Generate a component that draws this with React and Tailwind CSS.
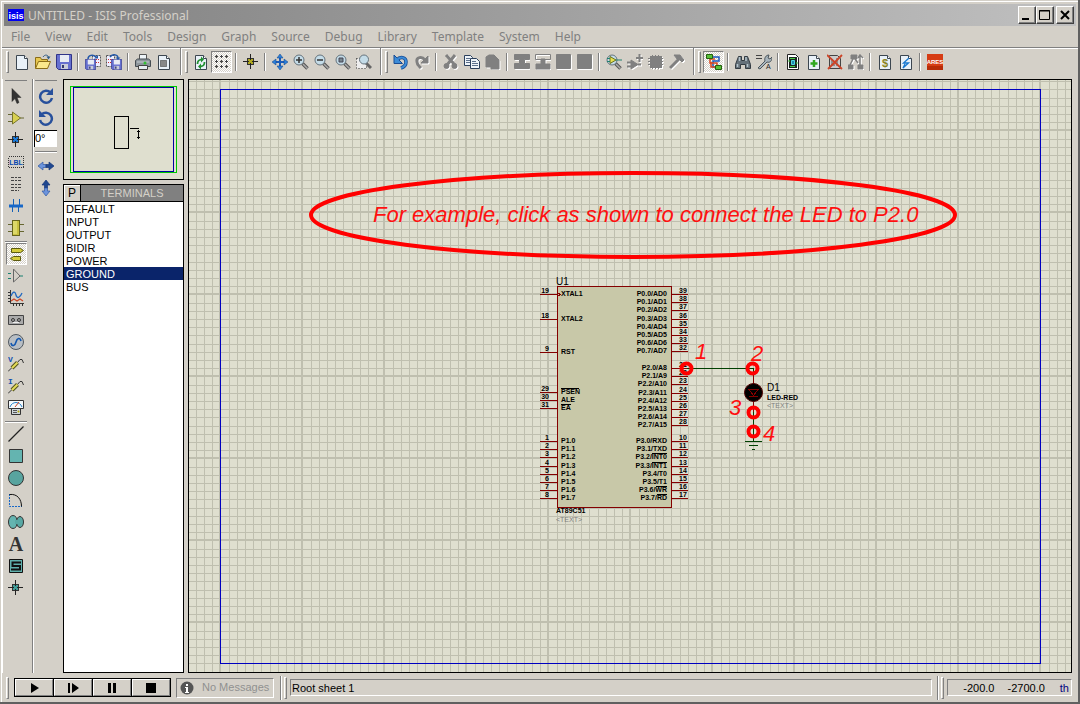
import { useState } from "react";

const Glyph = ({ children, crisp = false }) => (
  <svg
    width="16"
    height="16"
    viewBox="0 0 16 16"
    fill="none"
    shapeRendering={crisp ? "crispEdges" : "auto"}
    aria-hidden="true"
  >
    {children}
  </svg>
);

const Page = ({ children }) => (
  <Glyph>
    <path d="M2.500 1.500h8l3 3v11h-11z" fill="#e9f1f8" stroke="#3c4650" />
    <path d="M10.500 1.500v3h3" fill="#fff" stroke="#3c4650" />
    {children}
  </Glyph>
);

const Lens = ({ children }) => (
  <Glyph>
    <path d="M9.500 9.500l5 5" stroke="#555" strokeWidth="3.500" />
    <path d="M10 10l4.500 4.500" stroke="#aaa" strokeWidth="1.500" />
    <circle cx="6" cy="6" r="5" fill="#c4dce8" stroke="#66737c" />
    {children}
  </Glyph>
);

const Floppy = ({ x = 0, y = 0, s = 16 }) => (
  <svg x={x} y={y} width={s} height={s} viewBox="0 0 16 16">
    <path d="M.5.5h15v15h-13l-2-2z" fill="#6670d0" stroke="#303488" />
    <path d="M4 1h9v7H4z" fill="#e8ecf4" />
    <path d="M5 10h7v5H5z" fill="#c8ccd8" />
    <path d="M6 11h2v3H6z" fill="#333a70" />
  </svg>
);

const Sheet = ({ x }) => (
  <>
    <path d={`M${x}.5 1.500h8v11h-8z`} fill="#eef" stroke="#555" strokeDasharray="2 1" />
    <path d={`M${x + 2} 5.500h5M${x + 2} 8.500h5`} stroke="#d03030" strokeDasharray="1 1" />
  </>
);

const Probe = ({ letter }) => (
  <Glyph>
    <path d="M0 15.500l4-4M9 7l3-3.500h2l1.500 3.500" stroke="#333" />
    <path d="M4 12l5.500-5.500" stroke="#55551c" strokeWidth="4" />
    <path d="M4 12l5.500-5.500" stroke="#e4dc58" strokeWidth="2" />
    <text x="0" y="6" fontSize="8" fontWeight="bold" fill="#1050b0" fontFamily="Liberation Mono, monospace">
      {letter}
    </text>
  </Glyph>
);

const Marker = ({ color }) => (
  <Glyph crisp>
    <path d="M4.500 4.500h6v6h-6z" fill={color} stroke="#333" />
    <path d="M0 7.500h15M7.500 0v15" stroke="#222" />
    <path d="M6 6h3v3H6z" fill={color} />
  </Glyph>
);

// greyed out icon with the white emboss edge
const Disabled = ({ children }) => (
  <Glyph>
    <g transform="translate(1 1)" fill="#fff" stroke="#fff">{children}</g>
    <g fill="#808080" stroke="#808080">{children}</g>
  </Glyph>
);

const NewIcon = () => <Page />;
const OpenIcon = () => (
  <Glyph>
    <path d="M.5 14V3.500h5l1 2h6V14z" fill="#e8c850" stroke="#8a6c18" />
    <path d="M.500 14.500l3-7h12l-3 7z" fill="#fbe88c" stroke="#8a6c18" />
    <path d="M8 3c2-3 5-2 5.500 0" stroke="#305c88" />
    <path d="M11.500 2.500h4l-2 3z" fill="#305c88" />
  </Glyph>
);
const SaveIcon = () => <Glyph><Floppy /></Glyph>;
const ImportIcon = () => (
  <Glyph>
    <Sheet x={7} />
    <Floppy y={5} s={11} />
    <path d="M3 5c0-4 5-5 8-2" stroke="#2458a8" strokeWidth="1.500" />
    <path d="M9 4.500h4V1z" fill="#2458a8" />
  </Glyph>
);
const ExportIcon = () => (
  <Glyph>
    <Sheet x={0} />
    <Floppy x={5} y={5} s={11} />
    <path d="M4 3c3-4 8-2 8 1" stroke="#2458a8" strokeWidth="1.500" />
    <path d="M9.500 3.500h5L12 6z" fill="#2458a8" />
  </Glyph>
);
const PrintIcon = () => (
  <Glyph>
    <path d="M4.500 6V.5h7V6" fill="#eef4f8" stroke="#555" />
    <path d="M.5 6.500l2-1.500h11l2 1.500v6H.500z" fill="#8e969c" stroke="#444c52" />
    <path d="M3.500 11.500h9v4h-9z" fill="#e8eef2" stroke="#444" />
    <path d="M2 8h12" stroke="#c4ccd0" />
    <circle cx="10" cy="9" r="1.500" fill="#30c030" />
  </Glyph>
);
const PrintAreaIcon = () => (
  <Page><path d="M4.500 6.500h6v6h-6z" fill="#888" stroke="#333" strokeDasharray="1 1" /></Page>
);
const RedrawIcon = () => (
  <Page>
    <path d="M4.500 10c0-4 2-4 4-4.500M11.500 8c0 4-2 4-4 4.500" stroke="#209030" strokeWidth="1.800" />
    <path d="M8 2.500v6l3-3zM8 9.500v6l-3-3z" fill="#209030" />
  </Page>
);
const GridIcon = () => (
  <Glyph crisp>
    {[2, 7, 12].map((y) => (
      <path key={y} d={`M1 ${y}.5h3M6 ${y}.5h3M11 ${y}.5h3M2.500 ${y - 1}v3M7.500 ${y - 1}v3M12.500 ${y - 1}v3`} stroke="#444" />
    ))}
  </Glyph>
);
const OriginIcon = () => <Marker color="#b0a820" />;
const PanIcon = () => (
  <Glyph>
    <path d="M8 3v10M3 8h10" stroke="#1c5cb8" strokeWidth="2" />
    <path d="M8 0l3 4H5zM8 16l3-4H5zM0 8l4-3v6zM16 8l-4-3v6z" fill="#2c80dc" stroke="#104080" strokeWidth=".5" />
  </Glyph>
);
const ZoomInIcon = () => <Lens><path d="M3 6h6M6 3v6" stroke="#333" strokeWidth="1.500" /></Lens>;
const ZoomOutIcon = () => <Lens><path d="M3 6h6" stroke="#333" strokeWidth="1.500" /></Lens>;
const ZoomAllIcon = () => <Lens><path d="M4 4h4v4H4z" fill="#77858d" stroke="#445" /></Lens>;
const ZoomAreaIcon = () => (
  <Glyph>
    <path d="M.5 4.500h10v10H.500z" fill="#eee" stroke="#333" strokeDasharray="1 2" />
    <path d="M10 9l5 5" stroke="#666" strokeWidth="3" />
    <circle cx="8" cy="5.500" r="4.500" fill="#c4dce8" stroke="#66737c" />
  </Glyph>
);
const UndoIcon = () => (
  <Glyph>
    <path d="M4 6c3-4 9-3 9 2 0 3-2 5-5 6" stroke="#184c94" strokeWidth="3.500" />
    <path d="M1 1v8.500h8.500z" fill="#3c8cd8" stroke="#184c94" />
    <path d="M4 6c3-4 9-3 9 2 0 3-2 5-5 6" stroke="#3c8cd8" strokeWidth="2" />
  </Glyph>
);
const RedoIcon = () => (
  <Disabled>
    <path d="M11 6C8 2 2 3 3 8c0 3 2 4 4 6" fill="none" strokeWidth="3" />
    <path d="M14 2v7H7z" />
  </Disabled>
);
const CutIcon = () => (
  <Disabled>
    <path d="M3 1l9 10M12 1L4 11" fill="none" strokeWidth="3" />
    <circle cx="3.500" cy="12" r="2.500" /><circle cx="11.500" cy="12" r="2.500" />
  </Disabled>
);
const CopyIcon = () => (
  <Glyph>
    <path d="M.5 1.500h6l2 2v8h-8z" fill="#eef4fa" stroke="#2c405c" />
    <path d="M2 4.500h4M2 6.500h5M2 8.500h5" stroke="#5c708c" />
    <path d="M6.500 4.500h6l3 3v7h-9z" fill="#eef4fa" stroke="#2c405c" />
    <path d="M8 7.500h4M8 9.500h6M8 11.500h6" stroke="#5c708c" />
  </Glyph>
);
const PasteIcon = () => (
  <Disabled>
    <path d="M1 3l3-2h5l2 2 3 3v9H6v-2H1z" />
  </Disabled>
);
const BlockCopyIcon = () => (
  <Disabled><path d="M.5.500h15v5h-5v4h5v5H.500v-5h5v-4h-5z" /></Disabled>
);
const BlockMoveIcon = () => (
  <Disabled>
    <path d="M.5.500h15v5H.500z" fill="none" />
    <path d="M6 5h4v5h5v5H1v-5h5z" />
  </Disabled>
);
const BlockIcon = () => <Disabled><path d="M.5.500h14v14H.500z" /></Disabled>;
const PickIcon = () => (
  <Lens>
    <path d="M4 2.500v7L10 6z" fill="#e8e050" stroke="#667020" />
    <path d="M1 4.500h3M1 7.500h3M10 6h6" stroke="#208070" />
  </Lens>
);
const MakeDeviceIcon = () => (
  <Disabled>
    <path d="M4 6v9l7-4.500z" />
    <path d="M0 8.500h4M0 12.500h4M11 10.500h3M9 4h7M12.500 0v8" fill="none" strokeWidth="2" />
  </Disabled>
);
const PackageIcon = () => (
  <Disabled>
    <path d="M3 3h10v10H3z" strokeWidth="2" />
    <path d="M0 4.500h15M0 7.500h15M0 10.500h15M4.500 1v14M7.500 1v14M10.500 1v14" />
  </Disabled>
);
const HammerIcon = () => (
  <Disabled>
    <path d="M5 1h6l4 5-2 2-3-3H8z" strokeWidth="1" />
    <path d="M10 5l-9 9" strokeWidth="3" />
  </Disabled>
);
const AutoRouteIcon = () => (
  <Glyph>
    <path d="M7 3h6v4H7v6h3" stroke="#1c58c0" strokeWidth="1.500" />
    <path d="M9 5H4v4h7v4H5V8" stroke="#d84820" strokeWidth="1.500" />
    <path d="M.5.500h6v4h-6zM9.500 11.500h6v4h-6z" fill="#58c038" stroke="#246010" />
  </Glyph>
);
const FindIcon = () => (
  <Glyph>
    <path d="M3.500 2.500h3v4h3v-4h3l3 8v4h-5v-4h-5v4h-5v-4z" fill="#65717a" stroke="#333b42" />
    <path d="M2.500 10v3M12.500 10v3M4.500 3v4M11 3v4" stroke="#b4c4cc" strokeWidth="1.500" />
  </Glyph>
);
const PropertyIcon = () => (
  <Glyph>
    <path d="M0 1.500h6M0 4.500h6" stroke="#444" />
    <path d="M2 14l7-7c-1-3 1-6 4-6l-1 3 2 1 2-2c0 4-2 6-5 5l-7 7z" fill="#a8b4bc" stroke="#4c565c" />
    <text x="10" y="15" fontSize="7" fill="#222" fontFamily="Liberation Sans, sans-serif">A</text>
  </Glyph>
);
const ExplorerIcon = () => (
  <Glyph>
    <path d="M2.500.500h8l3 3v12h-11z" fill="#fff" stroke="#222" />
    <path d="M4 3h8v11H4z" fill="#182820" />
    <path d="M5 4.500h5M5 12.500h5M3 7h2M11 9h2" stroke="#48d048" />
    <path d="M6.500 6.500h3v4h-3z" fill="#208cb0" stroke="#50d8e0" />
  </Glyph>
);
const NewSheetIcon = () => <Page><path d="M8 6v7M4.500 9.500h7" stroke="#30a820" strokeWidth="2.500" /></Page>;
const RemoveSheetIcon = () => (
  <Glyph>
    <path d="M2.500 1.500h8l3 3v10h-11z" fill="#ccc" stroke="#444" />
    <path d="M5 5v6h3M10 4v8" stroke="#555" />
    <path d="M0 1l15 14M15 1L1 15" stroke="#cc4428" strokeWidth="1.800" />
  </Glyph>
);
const ExitSheetIcon = () => (
  <Disabled>
    <path d="M3 1h6v4H3zM0 11h5v4H0zM10 11h5v4h-5z" />
    <path d="M5 5l-3 6M7 5l3 4M12 2v9M10 4l2-3 3 3" fill="none" strokeWidth="1.500" />
  </Disabled>
);
const BomIcon = () => (
  <Page>
    <text x="5" y="13" fontSize="11" fontWeight="bold" fill="#8a8420" fontFamily="Liberation Sans, sans-serif">$</text>
  </Page>
);
const RulesIcon = () => (
  <Page><path d="M11 4L5.500 9h5L5 14l2-4" stroke="#1878d0" strokeWidth="1.300" /></Page>
);
const AresIcon = () => (
  <Glyph>
    <path d="M0 0h16v16H0z" fill="#d63c14" />
    <path d="M0 12h16v4H0z" fill="#b82c08" />
    <text x="8" y="10" textAnchor="middle" fontSize="6" fontWeight="bold" fill="#fff" fontFamily="Liberation Sans, sans-serif">ARES</text>
  </Glyph>
);

const SelectIcon = () => (
  <Glyph><path d="M4 .500v13l3-3 2 5 2-1-2-5h4z" fill="#333" stroke="#222" strokeWidth=".5" /></Glyph>
);
const ComponentIcon = () => (
  <Glyph>
    <path d="M0 4.500h5M0 11.500h5M12 8h4" stroke="#666634" />
    <path d="M4.500 2v12L12.500 8z" fill="#d8d050" stroke="#77752c" />
  </Glyph>
);
const JunctionIcon = () => <Marker color="#1878d8" />;
const LabelIcon = () => (
  <Glyph crisp>
    <path d="M.5 2.500h15v11H.500z" stroke="#333" strokeDasharray="1 1" />
    <text x="8" y="11" textAnchor="middle" fontSize="7" fontWeight="bold" fill="#0848b0" fontFamily="Liberation Sans, sans-serif">LBL</text>
  </Glyph>
);
const ScriptIcon = () => (
  <Glyph crisp>
    <path d="M3 1.500h11M3 4.500h11M3 8.500h11M3 11.500h11M3 14.500h8" stroke="#444" strokeDasharray="3 1 2 1" />
  </Glyph>
);
const BusIcon = () => (
  <Glyph>
    <path d="M5.500 1v6M11.500 1v6M4.500 8v6M10.500 8v6" stroke="#1460b8" />
    <path d="M1 8h14" stroke="#1868c8" strokeWidth="3" />
  </Glyph>
);
const SubcircuitIcon = () => (
  <Glyph crisp>
    <path d="M0 4.500h4M0 11.500h4M12 4.500h4M12 11.500h4" stroke="#666630" />
    <path d="M4.500.500h7v15h-7z" fill="#c8c040" stroke="#66641c" />
    <path d="M5 1h4v13H5z" fill="#dcd868" />
  </Glyph>
);
const TerminalIcon = () => (
  <Glyph>
    <path d="M3.500 2.500h9l3 2-3 2h-9zM5.500 10.500h7v4h-7l-3-2z" fill="#d4cc3c" stroke="#5c5a10" />
  </Glyph>
);
const DevicePinIcon = () => (
  <Glyph>
    <path d="M0 5.500h4M0 10.500h4M12 8h4" stroke="#188070" strokeDasharray="3 1" />
    <path d="M5.500 1v13L12 8z" stroke="#666" />
  </Glyph>
);
const GraphIcon = () => (
  <Glyph>
    <path d="M2.500 0v13.500H16M0 2.500h2M0 5.500h2M0 8.500h2M0 11.500h2M5.500 13v3M8.500 13v3M11.500 13v3M14.500 13v3" stroke="#333" />
    <path d="M3 6c2-5 4-5 5-1s4 3 6-2" stroke="#2068c0" strokeWidth="1.300" />
    <path d="M3 11l3-2 3 2 3-2 3 2" stroke="#cc4828" strokeWidth="1.300" />
  </Glyph>
);
const TapeIcon = () => (
  <Glyph>
    <path d="M.5 3.500h15v9H.500z" fill="#aaa" stroke="#444" />
    <circle cx="5" cy="8" r="1.500" stroke="#333" /><circle cx="11" cy="8" r="1.500" stroke="#333" />
    <path d="M5 10.500h6" stroke="#eee" />
  </Glyph>
);
const GeneratorIcon = () => (
  <Glyph>
    <circle cx="8" cy="8" r="7.500" fill="#b8bec4" stroke="#505860" />
    <path d="M3 9c1 4 4 3 5-1s4-5 5-1" stroke="#1458b0" strokeWidth="1.600" />
  </Glyph>
);
const VoltageIcon = () => <Probe letter="V" />;
const CurrentIcon = () => <Probe letter="I" />;
const MeterIcon = () => (
  <Glyph>
    <path d="M.5.500h15v8H.500z" fill="#f4f8fa" stroke="#333" />
    <path d="M2 7c2-6 10-6 12 0" stroke="#2880c8" />
    <path d="M7 7l4-5" stroke="#cc4020" />
    <path d="M3.500 8.500h9v6h-9z" fill="#ccd4d8" stroke="#333" />
    <path d="M5 10.500h4M5 12.500h4" stroke="#555" />
    <circle cx="10.500" cy="11.500" r="1" fill="#b8a800" />
  </Glyph>
);
const LineIcon = () => <Glyph><path d="M.5 15.500l15-15" stroke="#222" strokeWidth="1.300" /></Glyph>;
const BoxIcon = () => (
  <Glyph><path d="M1.500 1.500h13v13h-13z" fill="#64b4b0" stroke="#333" /></Glyph>
);
const CircleIcon = () => (
  <Glyph><circle cx="8" cy="8" r="7.500" fill="#58a49f" stroke="#333" /></Glyph>
);
const ArcIcon = () => (
  <Glyph>
    <path d="M1.500 2v12.500H14" stroke="#1868c8" strokeDasharray="2 1" />
    <path d="M1.500 2.500c8-1 12 5 12 12" stroke="#111" />
  </Glyph>
);
const PathIcon = () => (
  <Glyph>
    <ellipse cx="5" cy="8" rx="4.500" ry="6.500" fill="#64b4b0" stroke="#333" />
    <ellipse cx="12" cy="8" rx="3.500" ry="5.500" fill="#58a8a4" stroke="#333" />
    <path d="M7 6h4v4H7z" fill="#58a8a4" />
  </Glyph>
);
const TextIcon = () => (
  <span className="font-['Liberation_Serif',serif] text-[20px] leading-[22px] font-bold text-[#333]">A</span>
);
const SymbolIcon = () => (
  <Glyph>
    <path d="M1.500 1.500h13v13h-13z" fill="#60b0ac" stroke="#111" />
    <path d="M13 4.500H4.500V8h7.500v3.500H3" stroke="#111" strokeWidth="2" />
  </Glyph>
);
const Marker2DIcon = () => <Marker color="#409c98" />;

const RotateArrow = () => (
  <>
    <path d="M12.500 4.500A6 6 0 1 0 14 10" stroke="#28509c" strokeWidth="2.500" />
    <path d="M15 0v7H8z" fill="#28509c" />
  </>
);
const RotateCwIcon = () => <Glyph><RotateArrow /></Glyph>;
const RotateCcwIcon = () => <Glyph><g transform="translate(16) scale(-1 1)"><RotateArrow /></g></Glyph>;
const FlipHIcon = () => (
  <Glyph>
    <path d="M0 8l5-4v2.500h3v3H5V12z" fill="#6c94dc" stroke="#3058a4" strokeWidth=".7" />
    <path d="M16 8l-5-4v2.500H8v3h3V12z" fill="#204890" stroke="#183878" strokeWidth=".7" />
  </Glyph>
);
const FlipVIcon = () => (
  <Glyph>
    <path d="M8 0l4 5H9.500v3h-3V5H4z" fill="#204890" stroke="#183878" strokeWidth=".7" />
    <path d="M8 16l4-5H9.500V8h-3v3H4z" fill="#6c94dc" stroke="#3058a4" strokeWidth=".7" />
  </Glyph>
);

const menus = ["File", "View", "Edit", "Tools", "Design", "Graph", "Source", "Debug", "Library", "Template", "System", "Help"];

// "|" marks a separator
const toolbars = [
  [
    ["New", NewIcon], ["Open", OpenIcon], ["Save", SaveIcon], "|",
    ["Import section", ImportIcon], ["Export section", ExportIcon], "|",
    ["Print", PrintIcon], ["Print area", PrintAreaIcon],
  ],
  [
    ["Redraw", RedrawIcon], ["Grid", GridIcon, true], "|", ["Origin", OriginIcon], "|",
    ["Pan", PanIcon], ["Zoom in", ZoomInIcon], ["Zoom out", ZoomOutIcon],
    ["Zoom all", ZoomAllIcon], ["Zoom area", ZoomAreaIcon],
  ],
  [
    ["Undo", UndoIcon], ["Redo", RedoIcon], "|",
    ["Cut", CutIcon], ["Copy", CopyIcon], ["Paste", PasteIcon], "|",
    ["Block copy", BlockCopyIcon], ["Block move", BlockMoveIcon],
    ["Block rotate", BlockIcon], ["Block delete", BlockIcon], "|",
    ["Pick device", PickIcon], ["Make device", MakeDeviceIcon],
    ["Packaging tool", PackageIcon], ["Decompose", HammerIcon],
  ],
  [
    ["Wire autorouter", AutoRouteIcon, true], "|",
    ["Search and tag", FindIcon], ["Property assignment", PropertyIcon], "|",
    ["Design explorer", ExplorerIcon], ["New sheet", NewSheetIcon],
    ["Remove sheet", RemoveSheetIcon], ["Exit to parent", ExitSheetIcon], "|",
    ["Bill of materials", BomIcon], ["Electrical rules check", RulesIcon], "|",
    ["Netlist to ARES", AresIcon],
  ],
];

const modes = [
  ["Selection", SelectIcon], ["Component", ComponentIcon], ["Junction dot", JunctionIcon],
  ["Wire label", LabelIcon], ["Text script", ScriptIcon], ["Buses", BusIcon],
  ["Subcircuit", SubcircuitIcon], "|",
  ["Terminals", TerminalIcon], ["Device pins", DevicePinIcon], ["Graph", GraphIcon],
  ["Tape recorder", TapeIcon], ["Generator", GeneratorIcon], ["Voltage probe", VoltageIcon],
  ["Current probe", CurrentIcon], ["Virtual instruments", MeterIcon], "|",
  ["2D line", LineIcon], ["2D box", BoxIcon], ["2D circle", CircleIcon], ["2D arc", ArcIcon],
  ["2D path", PathIcon], ["2D text", TextIcon], ["2D symbol", SymbolIcon], ["2D marker", Marker2DIcon],
];

const terminals = ["DEFAULT", "INPUT", "OUTPUT", "BIDIR", "POWER", "GROUND", "BUS"];

const ToolButton = ({ label, icon: Icon, pressed = false, onClick }) => (
  <button
    type="button"
    aria-label={label}
    aria-pressed={pressed}
    onClick={onClick}
    className={`flex h-[22px] w-[21px] shrink-0 items-center justify-center ${
      pressed
        ? "border border-t-[#808080] border-l-[#808080] border-r-white border-b-white bg-[repeating-conic-gradient(#fff_0_25%,#d4d0c8_0_50%)] bg-[length:2px_2px]"
        : ""
    }`}
  >
    <Icon />
  </button>
);

const Grip = () => (
  <div className="h-[22px] w-[3px] shrink-0 border border-t-white border-l-white border-r-[#808080] border-b-[#808080]" />
);

const Toolbar = ({ items, first }) => (
  <div className={`flex items-center pr-[6px] ${first ? "pl-[4px]" : "border-l border-[#808080] pl-0"}`}>
    {!first && <div className="mr-[3px] h-[26px] w-px bg-white" />}
    <Grip />
    <div className="ml-[2px] flex items-center">
      {items.map((item, i) =>
        item === "|" ? (
          <div key={i} className="mx-[3px] h-[18px] w-[2px] border-l border-r border-l-[#808080] border-r-white" />
        ) : (
          <ToolButton key={i} label={item[0]} icon={item[1]} pressed={item[2]} />
        )
      )}
    </div>
  </div>
);

const TitleBar = () => (
  <header className="flex h-[22px] shrink-0 items-center bg-linear-to-r from-[#808080] to-[#c0c0c0] pr-[2px] pl-[4px]">
    <svg width="16" height="12" aria-hidden="true">
      <rect width="16" height="12" fill="#0000f0" />
      <text x="8" y="10" textAnchor="middle" fontSize="9" fontWeight="bold" fill="#fff" fontFamily="Liberation Sans, sans-serif">isis</text>
    </svg>
    <h1 className="ml-1 flex-1 pt-[2px] text-[12px] leading-[20px] text-[#d4d0c8]">UNTITLED - ISIS Professional</h1>
    {["Minimize", "Maximize", "Close"].map((name) => (
      <button
        key={name}
        type="button"
        aria-label={name}
        className={`h-[18px] w-[18px] border border-t-white border-l-white border-r-[#404040] border-b-[#404040] bg-[#d4d0c8] shadow-[inset_-1px_-1px_#808080] ${
          name === "Close" ? "ml-[2px]" : ""
        }`}
      >
        <Glyph>
          {name === "Minimize" && <path d="M3 12h7" stroke="#000" strokeWidth="2" />}
          {name === "Maximize" && <path d="M2.500 3.500h10v9h-10zM2 4h11" stroke="#000" />}
          {name === "Close" && <path d="M4 4l8 8M12 4l-8 8" stroke="#000" strokeWidth="2" />}
        </Glyph>
      </button>
    ))}
  </header>
);

const ModeBar = () => {
  const [mode, setMode] = useState("Terminals");

  return (
    <nav aria-label="Modes" className="flex w-[31px] shrink-0 flex-col items-center border-r border-l border-l-white border-r-[#808080] pr-[3px]">
      <div className="mb-[4px] h-[2px] w-[22px] border-b border-[#808080]" />
      {modes.map((item, i) =>
        item === "|" ? (
          <div key={i} className="mt-[2px] h-[2px] w-[22px] border-t border-b border-t-[#808080] border-b-white" />
        ) : (
          <ToolButton key={i} label={item[0]} icon={item[1]} pressed={mode === item[0]} onClick={() => setMode(item[0])} />
        )
      )}
    </nav>
  );
};

const OrientationBar = () => (
  <div className="flex w-[30px] shrink-0 flex-col items-center border-l border-white pr-[6px]">
    <div className="mb-[4px] h-[2px] w-[22px] border-b border-[#808080]" />
    <ToolButton label="Rotate clockwise" icon={RotateCwIcon} />
    <ToolButton label="Rotate anti-clockwise" icon={RotateCcwIcon} />
    <input
      aria-label="Angle"
      defaultValue="0°"
      className="mt-px h-[17px] w-[23px] border-t border-l border-black bg-white pb-[2px] text-[11px] outline-none"
    />
    <div className="mt-[4px] mb-[2px] h-[2px] w-[22px] border-t border-b border-t-[#808080] border-b-white" />
    <ToolButton label="Flip horizontally" icon={FlipHIcon} />
    <ToolButton label="Flip vertically" icon={FlipVIcon} />
  </div>
);

const SidePanel = () => {
  const [selected, setSelected] = useState("GROUND");

  return (
    <aside className="mr-1 flex w-[121px] shrink-0 flex-col gap-1">
      <div className="h-[101px] shrink-0 border border-black bg-[#dfdfcf]">
        <svg width="119" height="99" fill="none" shapeRendering="crispEdges" aria-hidden="true">
          <path d="M6.500 6.500h106v86H6.500z" stroke="#00c800" />
          <path d="M9.500 7.500h100v84H9.500z" stroke="#0000a0" />
          <path d="M50.500 36.500h14v32h-14zM66 48.500h9M74.500 50v9M73 51.500h3M73 57.500h3" stroke="#000" />
        </svg>
      </div>
      <section className="flex min-h-0 flex-1 flex-col border border-black bg-white">
        <div className="flex h-[17px] shrink-0 border-b border-black bg-[#808080]">
          <button type="button" className="w-[17px] border-r border-black bg-[#d4d0c8] text-[12px] leading-[16px] shadow-[inset_1px_1px_#fff]">
            P
          </button>
          <h2 className="flex-1 text-center text-[11px] leading-[16px] text-[#d4d0c8]">TERMINALS</h2>
        </div>
        <ul>
          {terminals.map((name) => (
            <li key={name}>
              <button
                type="button"
                onClick={() => setSelected(name)}
                className={`block h-[13px] w-full pl-[2px] text-left text-[11px] leading-[14px] ${
                  name === selected ? "bg-[#0a246a] text-white" : ""
                }`}
              >
                {name}
              </button>
            </li>
          ))}
        </ul>
      </section>
    </aside>
  );
};

const PITCH = 8.2;

const bank = (names, top, first, step) =>
  names.map((name, i) => ({ name, y: top + Math.round(i * PITCH), no: first + i * step }));

const leftPins = [
  { name: "XTAL1", y: 8, no: 19 },
  { name: "XTAL2", y: 33, no: 18 },
  { name: "RST", y: 66, no: 9 },
  { name: "PSEN", y: 106, no: 29, bar: [4, 22] },
  { name: "ALE", y: 114, no: 30 },
  { name: "EA", y: 122, no: 31, bar: [4, 14] },
  ...bank(["P1.0", "P1.1", "P1.2", "P1.3", "P1.4", "P1.5", "P1.6", "P1.7"], 155, 1, 1),
];

const rightPins = [
  ...bank(["P0.0/AD0", "P0.1/AD1", "P0.2/AD2", "P0.3/AD3", "P0.4/AD4", "P0.5/AD5", "P0.6/AD6", "P0.7/AD7"], 8, 39, -1),
  ...bank(["P2.0/A8", "P2.1/A9", "P2.2/A10", "P2.3/A11", "P2.4/A12", "P2.5/A13", "P2.6/A14", "P2.7/A15"], 82, 21, 1),
  ...bank(["P3.0/RXD", "P3.1/TXD", "P3.2/INT0", "P3.3/INT1", "P3.4/T0", "P3.5/T1", "P3.6/WR", "P3.7/RD"], 155, 10, 1),
];

// width of the overline on the active-low names
const bars = { "P3.2/INT0": 15, "P3.3/INT1": 15, "P3.6/WR": 11, "P3.7/RD": 10 };

const Chip = () => (
  <g transform="translate(337 196)" fontSize="7" fontWeight="bold">
    <rect x=".5" y=".5" width="114" height="221" fill="#c8c8a8" stroke="#840000" />
    <text x="-1" y="-1" fontSize="10" fontWeight="normal">U1</text>
    {leftPins.map(({ name, y, no, bar }) => (
      <g key={name}>
        <path d={`M-17 ${y}.5H0`} stroke="#840000" />
        <text x="-8" y={y - 1} textAnchor="end">{no}</text>
        <text x="4" y={y + 2}>{name}</text>
        {bar && <path d={`M${bar[0]} ${y - 4}.5H${bar[1]}`} stroke="#000" />}
      </g>
    ))}
    {rightPins.map(({ name, y, no }) => (
      <g key={name}>
        <path d={`M115 ${y}.5h16`} stroke="#840000" />
        <text x="122" y={y - 1}>{no}</text>
        <text x="110" y={y + 2} textAnchor="end">{name}</text>
        {bars[name] && <path d={`M${110 - bars[name]} ${y - 4}.5H110`} stroke="#000" />}
      </g>
    ))}
    <path d="M0 6l3 2.500L0 11" stroke="#840000" fill="none" />
    <text x="-1" y="227">AT89C51</text>
    <text x="-1" y="236" fill="#808080" fontWeight="normal">&lt;TEXT&gt;</text>
  </g>
);

const Led = () => (
  <g>
    <path d="M467 278.500h66" stroke="#004000" />
    <path d="M533.500 278v60" stroke="#840000" />
    <path d="M533.500 278v7M533.500 322v29M525 351.500h17M529 355.500h9M532 359.500h3" stroke="#004000" />
    <circle cx="533.500" cy="302.500" r="9" fill="#000" stroke="#500000" shapeRendering="auto" />
    <path d="M529 299.500h9l-4.500 6zM529 306.500h9" stroke="#840000" fill="none" />
    <text x="547" y="301" fontSize="10">D1</text>
    <text x="547" y="310" fontSize="7" fontWeight="bold">LED-RED</text>
    <text x="547" y="318" fontSize="7" fill="#808080">&lt;TEXT&gt;</text>
  </g>
);

const steps = [
  { n: 1, cx: 466, cy: 278, x: 475, y: 269 },
  { n: 2, cx: 532, cy: 278, x: 531, y: 271 },
  { n: 3, cx: 533, cy: 322, x: 509, y: 325 },
  { n: 4, cx: 533, cy: 341, x: 543, y: 351 },
];

const Schematic = () => {
  const lines = Array.from({ length: 9 }, (_, i) => Math.ceil((i + 1) * PITCH));

  return (
    <main className="min-w-0 flex-1 border border-black bg-[#dfdfcf]">
      <svg className="block h-full w-full" fontFamily="Liberation Sans, sans-serif">
        <defs>
          <pattern id="grid" x="31" y="50" width="82" height="82" patternUnits="userSpaceOnUse">
            <g fill="#bfbfaf" shapeRendering="crispEdges">
              <path d="M0 0h82v1H0zM0 0h1v82H0zM81 0h1v82h-1zM0 81h82v1H0z" />
              {lines.map((n) => (
                <path key={n} d={`M0 ${n}h82v1H0zM${n} 0h1v82h-1z`} />
              ))}
            </g>
          </pattern>
        </defs>
        <rect width="100%" height="100%" fill="url(#grid)" />
        <g transform="translate(31 10)">
          <g shapeRendering="crispEdges">
            <path d="M.500 -.500h820v574H.500z" fill="none" stroke="#0000c0" />
            <Chip />
            <Led />
          </g>
          <g fill="none" stroke="#f00">
            <ellipse cx="413" cy="125" rx="322" ry="42" strokeWidth="4" />
            {steps.map(({ n, cx, cy }) => (
              <circle key={n} cx={cx + 0.5} cy={cy + 0.5} r="5" strokeWidth="4" />
            ))}
          </g>
          <g fill="#ff1010" fontStyle="italic" fontSize="22">
            <text x="153" y="132">For example, click as shown to connect the LED to P2.0</text>
            {steps.map(({ n, x, y }) => (
              <text key={n} x={x} y={y}>{n}</text>
            ))}
          </g>
        </g>
      </svg>
    </main>
  );
};

const transport = [
  ["Play", "M5 3l8 5-8 5z"],
  ["Step", "M3 3h2v10H3zM7 3l7 5-7 5z"],
  ["Pause", "M4 3h3v10H4zM9 3h3v10H9z"],
  ["Stop", "M3 3h10v10H3z"],
];

const sunken = "border border-t-[#808080] border-l-[#808080] border-r-white border-b-white";

const Divider = () => (
  <div className="mr-[2px] h-[24px] w-[2px] border-l border-r border-l-[#808080] border-r-white" />
);

const StatusBar = () => (
  <footer className="flex h-[29px] shrink-0 items-center pr-[6px] pl-[4px] text-[11px]">
    <Grip />
    <div className="ml-[5px] flex h-[19px] gap-px border border-black bg-black">
      {transport.map(([name, d]) => (
        <button
          key={name}
          type="button"
          aria-label={name}
          className="flex w-[38px] items-center justify-center border border-t-white border-l-white border-r-[#808080] border-b-[#808080] bg-[#d4d0c8]"
        >
          <Glyph><path d={d} fill="#000" /></Glyph>
        </button>
      ))}
    </div>
    <div className={`ml-[5px] mr-[6px] flex h-[20px] w-[98px] items-center gap-2 pl-[3px] text-[#909090] ${sunken}`}>
      <svg width="14" height="14" aria-hidden="true">
        <circle cx="7" cy="7" r="6.500" fill="#555" />
        <path d="M6 3h2v2H6zM5 6h3v5h1v1H5v-1h1V7H5z" fill="#fff" />
      </svg>
      <span className="whitespace-nowrap">No Messages</span>
    </div>
    <Divider />
    <Grip />
    <div className={`ml-[3px] mr-[5px] h-[17px] flex-1 pl-[1px] leading-[16px] ${sunken}`}>Root sheet 1</div>
    <Divider />
    <Grip />
    <div className={`ml-[3px] flex h-[17px] w-[125px] justify-end gap-[13px] pr-[2px] leading-[16px] ${sunken}`}>
      <span>-200.0</span>
      <span>-2700.0</span>
      <span className="ml-[2px] text-[#000080]">th</span>
    </div>
  </footer>
);

export default function App() {
  return (
    <div className="h-screen border-r-2 border-b-2 border-[#606060] bg-[#d4d0c8] pt-px pl-px font-['Liberation_Sans',Arial,sans-serif] text-black">
      <div className="flex h-full flex-col border-t border-l border-white">
        <div className="shrink-0 pt-[2px] pr-[2px] pl-[2px] font-['Noto_Sans',sans-serif]">
          <TitleBar />
          <nav className="flex h-[21px] items-center gap-[15px] pl-[7px] text-[12px] text-[#808080]">
            {menus.map((name) => (
              <button key={name} type="button">{name}</button>
            ))}
          </nav>
        </div>
        <div className="flex h-[28px] shrink-0 border-t border-[#808080] shadow-[inset_0_1px_#fff]">
          {toolbars.map((items, i) => (
            <Toolbar key={i} items={items} first={i === 0} />
          ))}
        </div>
        <div className="mt-[4px] flex min-h-0 flex-1 pr-[6px]">
          <ModeBar />
          <OrientationBar />
          <SidePanel />
          <Schematic />
        </div>
        <StatusBar />
      </div>
    </div>
  );
}
